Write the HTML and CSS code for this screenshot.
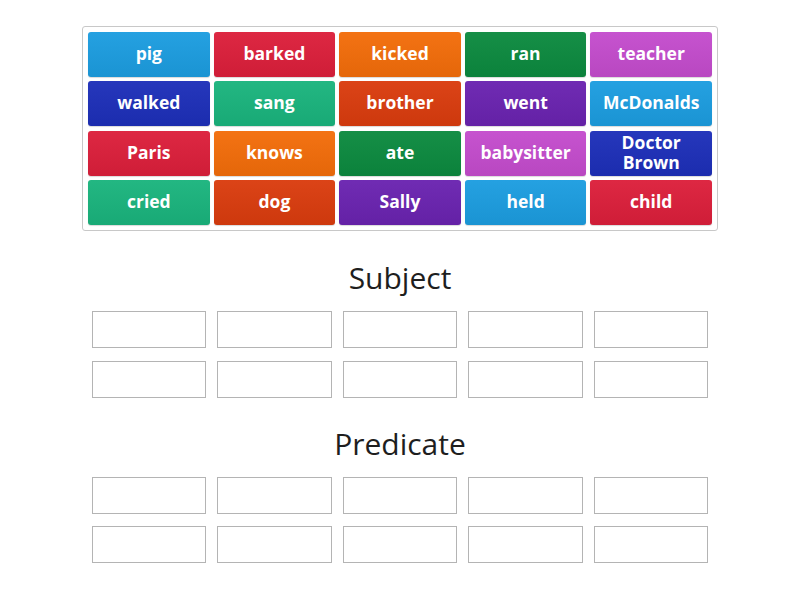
FILE: index.html
```html
<!DOCTYPE html>
<html>
  <head>
    <meta charset='utf-8'>
    <title>Subject and Predicate</title>
    <link rel="stylesheet" href="styles.css">
  </head>
  <body>
    <div class='page'>
      <div class='bank'>
        <div class='tile c1'>pig</div>
        <div class='tile c2'>barked</div>
        <div class='tile c3'>kicked</div>
        <div class='tile c4'>ran</div>
        <div class='tile c5'>teacher</div>
        <div class='tile c6'>walked</div>
        <div class='tile c7'>sang</div>
        <div class='tile c8'>brother</div>
        <div class='tile c9'>went</div>
        <div class='tile c1'>McDonalds</div>
        <div class='tile c2'>Paris</div>
        <div class='tile c3'>knows</div>
        <div class='tile c4'>ate</div>
        <div class='tile c5'>babysitter</div>
        <div class='tile c6'>Doctor Brown</div>
        <div class='tile c7'>cried</div>
        <div class='tile c8'>dog</div>
        <div class='tile c9'>Sally</div>
        <div class='tile c1'>held</div>
        <div class='tile c2'>child</div>
      </div>

      <div class='group subject'>
        <h2>Subject</h2>
        <div class='slots'>
          <div class='slot'></div><div class='slot'></div><div class='slot'></div><div class='slot'></div><div class='slot'></div>
          <div class='slot'></div><div class='slot'></div><div class='slot'></div><div class='slot'></div><div class='slot'></div>
        </div>
      </div>

      <div class='group'>
        <h2>Predicate</h2>
        <div class='slots'>
          <div class='slot'></div><div class='slot'></div><div class='slot'></div><div class='slot'></div><div class='slot'></div>
          <div class='slot'></div><div class='slot'></div><div class='slot'></div><div class='slot'></div><div class='slot'></div>
        </div>
      </div>
    </div>
  </body>
</html>
```

FILE: styles.css
```css
body {
  margin: 0;
  background: #fff;
  font-family: "Open Sans", "Liberation Sans", sans-serif;
}
.page {
  width: 636px;
  margin: 26px auto 0;
}
.bank {
  border: solid 1px #c8c8c8;
  border-radius: 3px;
  padding: 5px;
  display: grid;
  grid-template-columns: repeat(5, 1fr);
  column-gap: 4px;
  row-gap: 4.4px;
}
.tile {
  height: 45px;
  box-sizing: border-box;
  border-radius: 3px;
  display: flex;
  align-items: center;
  justify-content: center;
  text-align: center;
  padding: 0 10px 3px;
  color: #fff;
  font-weight: bold;
  font-size: 17.5px;
  line-height: 20px;
  box-shadow: 0 1px 1px rgba(0,0,0,0.15);
  background-image: linear-gradient(rgba(255,255,255,0.04), rgba(0,0,0,0.06));
}
.c1 { background-color: #1c9de0; }
.c2 { background-color: #dc1f3b; }
.c3 { background-color: #f36d0a; }
.c4 { background-color: #0c8a3f; }
.c5 { background-color: #c44ccd; }
.c6 { background-color: #1d2fb9; }
.c7 { background-color: #1ab47d; }
.c8 { background-color: #da3c0e; }
.c9 { background-color: #6a23b0; }

.group {
  padding-top: 26px;
}
.group.subject {
  padding-top: 27px;
}
h2 {
  margin: 0 0 13px;
  font-weight: normal;
  font-size: 30px;
  line-height: 40px;
  color: #1e1e1e;
  text-align: center;
}
.slots {
  width: 616px;
  margin: 0 auto;
  display: grid;
  grid-template-columns: repeat(5, 1fr);
  column-gap: 11px;
  row-gap: 12.5px;
}
.slot {
  height: 35px;
  border: solid 1px #b4b4b4;
}
```
